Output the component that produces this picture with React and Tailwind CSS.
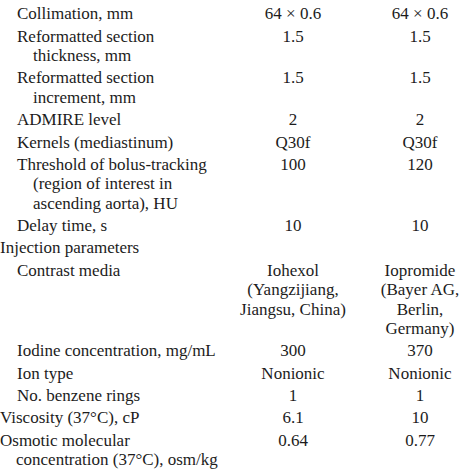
import React from "react";

const rows = [
  { label: ["Collimation, mm"], a: ["64 × 0.6"], b: ["64 × 0.6"] },
  { label: ["Reformatted section", "thickness, mm"], a: ["1.5"], b: ["1.5"] },
  { label: ["Reformatted section", "increment, mm"], a: ["1.5"], b: ["1.5"] },
  { label: ["ADMIRE level"], a: ["2"], b: ["2"] },
  { label: ["Kernels (mediastinum)"], a: ["Q30f"], b: ["Q30f"] },
  {
    label: ["Threshold of bolus-tracking", "(region of interest in", "ascending aorta), HU"],
    a: ["100"],
    b: ["120"],
  },
  { label: ["Delay time, s"], a: ["10"], b: ["10"] },
  { label: ["Injection parameters"], a: [], b: [], top: true },
  {
    label: ["Contrast media"],
    a: ["Iohexol", "(Yangzijiang,", "Jiangsu, China)"],
    b: ["Iopromide", "(Bayer AG,", "Berlin,", "Germany)"],
  },
  { label: ["Iodine concentration, mg/mL"], a: ["300"], b: ["370"] },
  { label: ["Ion type"], a: ["Nonionic"], b: ["Nonionic"] },
  { label: ["No. benzene rings"], a: ["1"], b: ["1"] },
  { label: ["Viscosity (37°C), cP"], a: ["6.1"], b: ["10"], top: true },
  {
    label: ["Osmotic molecular", "concentration (37°C), osm/kg"],
    a: ["0.64"],
    b: ["0.77"],
    top: true,
  },
];

function Lines({ items }) {
  return items.map((t, i) => (
    <div key={i} className="whitespace-nowrap">
      {t}
    </div>
  ));
}

export default function App() {
  return (
    <div className="w-[474px] h-[474px] overflow-hidden bg-white text-[#1c1c1c] font-['Liberation_Serif',serif] text-[17px] leading-[19.5px] pt-[3px]">
      {rows.map((r, i) => (
        <div key={i} className="grid grid-cols-[236px_114px_124px] py-[1.4px]">
          <div className={r.top ? "pl-0" : "pl-[17px]"}>
            <div className="whitespace-nowrap">{r.label[0]}</div>
            {r.label.slice(1).map((t, j) => (
              <div key={j} className="whitespace-nowrap pl-[16px]">
                {t}
              </div>
            ))}
          </div>
          <div className="text-center">
            <Lines items={r.a} />
          </div>
          <div className="text-center pl-[16px]">
            <Lines items={r.b} />
          </div>
        </div>
      ))}
    </div>
  );
}
